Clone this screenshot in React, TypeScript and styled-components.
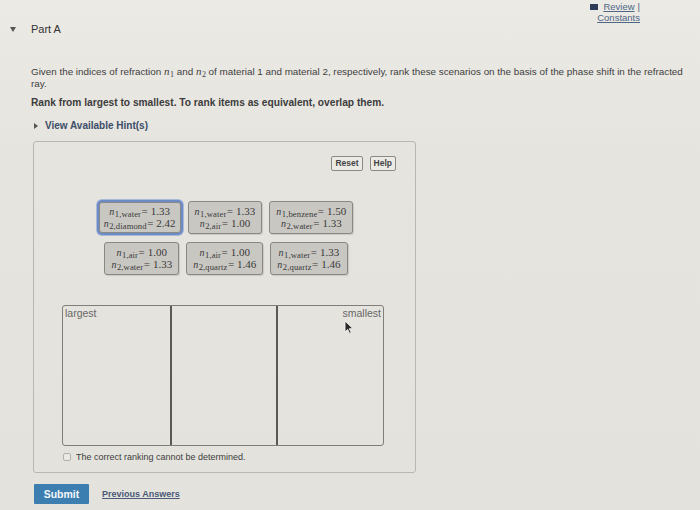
import React from "react";
import styled, { createGlobalStyle } from "styled-components";

const Global = createGlobalStyle`
  html, body { margin: 0; padding: 0; }
  body {
    background: #e6e4de;
    font-family: "Liberation Sans", Arial, sans-serif;
    color: #3a3a3a;
    width: 700px;
    height: 510px;
    overflow: hidden;
  }
`;

const Page = styled.div`
  display: flex;
  flex-direction: column;
  height: 510px;
  background: linear-gradient(180deg, #eceae5 0%, #e6e4de 30%, #e4e2dc 100%);
`;

const TopLinks = styled.div`
  display: flex;
  flex-direction: column;
  align-items: flex-end;
  padding: 1px 60px 0 0;
  height: 23px;
  box-sizing: border-box;
  font-size: 9.5px;
  line-height: 11px;
`;

const LinkRow = styled.div`
  display: flex;
  align-items: center;
  gap: 3px;
  color: #4d5f7a;
`;

const TopLink = styled.span`
  color: #4d6684;
  text-decoration: underline;
`;

const BookIcon = styled.span`
  display: inline-block;
  width: 8px;
  height: 6px;
  background: #2f3c58;
  margin-right: 2px;
`;

const PartHeader = styled.div`
  display: flex;
  align-items: center;
  height: 12px;
  padding-left: 10px;
  gap: 15px;
  font-size: 11px;
  color: #333;
`;

const Caret = styled.span`
  width: 0;
  height: 0;
  border-left: 3.5px solid transparent;
  border-right: 3.5px solid transparent;
  border-top: 5px solid #555;
`;

const Content = styled.div`
  display: flex;
  flex-direction: column;
  padding: 30px 8px 0 31px;
`;

const Para = styled.p`
  margin: 0;
  font-size: 9.85px;
  line-height: 12px;
  color: #3e3e3e;
`;

const MathN = styled.span`
  font-family: "Liberation Serif", "DejaVu Serif", serif;
  font-style: italic;
  font-size: 11px;
  line-height: 12px;
  margin-right: 0.5px;
`;

const MathSub = styled.span`
  font-family: "Liberation Serif", "DejaVu Serif", serif;
  font-size: 8px;
  line-height: 8px;
  position: relative;
  top: 2px;
`;

const Bold = styled.p`
  margin: 7px 0 0;
  font-size: 10.2px;
  line-height: 12px;
  font-weight: bold;
  color: #3c3c3c;
`;

const Hint = styled.div`
  display: flex;
  align-items: center;
  gap: 7px;
  margin: 11px 0 0 3px;
  font-size: 10px;
  font-weight: bold;
  color: #3b4d68;
  line-height: 12px;
`;

const HintArrow = styled.span`
  width: 0;
  height: 0;
  border-top: 3.5px solid transparent;
  border-bottom: 3.5px solid transparent;
  border-left: 4px solid #555;
`;

const Box = styled.div`
  margin: 9px 0 0 2px;
  width: 383px;
  height: 332px;
  box-sizing: border-box;
  border: 1px solid #b9b7b1;
  border-radius: 3px;
  display: flex;
  flex-direction: column;
`;

const ToolRow = styled.div`
  display: flex;
  justify-content: flex-end;
  gap: 7px;
  padding: 14px 19px 0 0;
`;

const SmallBtn = styled.button`
  font-family: "Liberation Sans", Arial, sans-serif;
  font-size: 8.5px;
  font-weight: bold;
  color: #444;
  background: #eceae5;
  border: 1px solid #8b8a87;
  border-radius: 2px;
  height: 15px;
  padding: 0 3px;
  line-height: 13px;
`;

const TileArea = styled.div`
  display: flex;
  flex-direction: column;
  align-items: center;
  gap: 8px;
  margin-top: 30px;
  padding-left: 3px;
`;

const TileRow = styled.div`
  display: flex;
  gap: 7px;
  align-items: center;
`;

const Tile = styled.div<{ $selected?: boolean }>`
  display: flex;
  flex-direction: column;
  align-items: center;
  justify-content: center;
  box-sizing: border-box;
  height: ${(p) => (p.$selected ? 31 : 33)}px;
  padding: 0 ${(p) => (p.$selected ? 4 : 6)}px;
  background: #c9c7c2;
  border: 1.5px solid #8a8884;
  border-radius: 3px;
  box-shadow: ${(p) =>
    p.$selected ? "0 0 0 2px #6d8cc7, 0 0 0 3px #a9b9d8" : "1px 1px 1px rgba(0,0,0,0.12)"};
  font-family: "Liberation Serif", "DejaVu Serif", serif;
  color: #3a3a3a;
`;

const TileLine = styled.div`
  display: flex;
  align-items: baseline;
  white-space: nowrap;
  line-height: 11px;
  font-size: 11px;
`;

const NVar = styled.span`
  font-style: italic;
  font-size: 10px;
  margin-right: 0.5px;
`;

const Sub = styled.span`
  font-size: 8.6px;
  position: relative;
  top: 2px;
  letter-spacing: 0.1px;
  margin-right: 0.5px;
`;

const Eq = styled.span`
  margin-right: 3px;
`;

const RankWrap = styled.div`
  margin: 30px 0 0 28px;
  width: 322px;
  height: 141px;
  box-sizing: border-box;
  border: 1.5px solid #7f7e7b;
  border-radius: 3px;
  display: grid;
  grid-template-columns: 1fr 1fr 1fr;
`;

const RankCol = styled.div<{ $align: "left" | "right" }>`
  position: relative;
  border-left: 2px solid #5a5957;
  &:first-child { border-left: none; }
  padding: 1px 2px;
  text-align: ${(p) => p.$align};
  font-size: 10.5px;
  color: #686868;
`;

const Cursor = styled.svg`
  position: absolute;
  right: 29px;
  top: 14px;
`;

const CheckRow = styled.label`
  display: flex;
  align-items: center;
  gap: 5px;
  margin: 6px 0 0 29px;
  font-size: 9px;
  color: #3d3d3d;
`;

const Check = styled.span`
  width: 8px;
  height: 8px;
  box-sizing: border-box;
  border: 1px solid #b3b1ac;
  border-radius: 2px;
  background: #ebe9e4;
`;

const Footer = styled.div`
  display: flex;
  align-items: center;
  gap: 13px;
  margin: 11px 0 0 3px;
`;

const Submit = styled.button`
  width: 55px;
  height: 20px;
  background: #3d7eb0;
  border: none;
  border-radius: 1px;
  color: #f4f7fa;
  font-family: "Liberation Sans", Arial, sans-serif;
  font-weight: bold;
  font-size: 10.5px;
  padding: 0;
`;

const PrevLink = styled.span`
  font-size: 9px;
  font-weight: bold;
  color: #4a5a78;
  text-decoration: underline;
`;

type TileData = { m1: string; v1: string; m2: string; v2: string; selected?: boolean };

const row1: TileData[] = [
  { m1: "1,water", v1: "1.33", m2: "2,diamond", v2: "2.42", selected: true },
  { m1: "1,water", v1: "1.33", m2: "2,air", v2: "1.00" },
  { m1: "1,benzene", v1: "1.50", m2: "2,water", v2: "1.33" },
];
const row2: TileData[] = [
  { m1: "1,air", v1: "1.00", m2: "2,water", v2: "1.33" },
  { m1: "1,air", v1: "1.00", m2: "2,quartz", v2: "1.46" },
  { m1: "1,water", v1: "1.33", m2: "2,quartz", v2: "1.46" },
];

function TileView({ t }: { t: TileData }) {
  return (
    <Tile $selected={t.selected}>
      <TileLine>
        <NVar>n</NVar>
        <Sub>{t.m1}</Sub>
        <Eq>=</Eq>
        {t.v1}
      </TileLine>
      <TileLine>
        <NVar>n</NVar>
        <Sub>{t.m2}</Sub>
        <Eq>=</Eq>
        {t.v2}
      </TileLine>
    </Tile>
  );
}

export default function App() {
  return (
    <Page>
      <Global />
      <TopLinks>
        <LinkRow>
          <BookIcon />
          <TopLink>Review</TopLink>
          <span>|</span>
        </LinkRow>
        <TopLink>Constants</TopLink>
      </TopLinks>
      <PartHeader>
        <Caret />
        <span>Part A</span>
      </PartHeader>
      <Content>
        <Para>
          Given the indices of refraction <MathN>n</MathN>
          <MathSub>1</MathSub> and <MathN>n</MathN>
          <MathSub>2</MathSub> of material 1 and material 2, respectively, rank these scenarios on the
          basis of the phase shift in the refracted ray.
        </Para>
        <Bold>Rank from largest to smallest. To rank items as equivalent, overlap them.</Bold>
        <Hint>
          <HintArrow />
          View Available Hint(s)
        </Hint>
        <Box>
          <ToolRow>
            <SmallBtn>Reset</SmallBtn>
            <SmallBtn>Help</SmallBtn>
          </ToolRow>
          <TileArea>
            <TileRow>
              {row1.map((t, i) => (
                <TileView key={i} t={t} />
              ))}
            </TileRow>
            <TileRow>
              {row2.map((t, i) => (
                <TileView key={i} t={t} />
              ))}
            </TileRow>
          </TileArea>
          <RankWrap>
            <RankCol $align="left">largest</RankCol>
            <RankCol $align="left" />
            <RankCol $align="right">
              smallest
              <Cursor width="10" height="14" viewBox="0 0 10 14">
                <path d="M1 1 L1 12 L3.6 9.4 L5.6 13.4 L7.3 12.6 L5.3 8.7 L9 8.7 Z" fill="#2a2a2a" stroke="#f4f4f4" strokeWidth="0.9" />
              </Cursor>
            </RankCol>
          </RankWrap>
          <CheckRow>
            <Check />
            The correct ranking cannot be determined.
          </CheckRow>
        </Box>
        <Footer>
          <Submit>Submit</Submit>
          <PrevLink>Previous Answers</PrevLink>
        </Footer>
      </Content>
    </Page>
  );
}
